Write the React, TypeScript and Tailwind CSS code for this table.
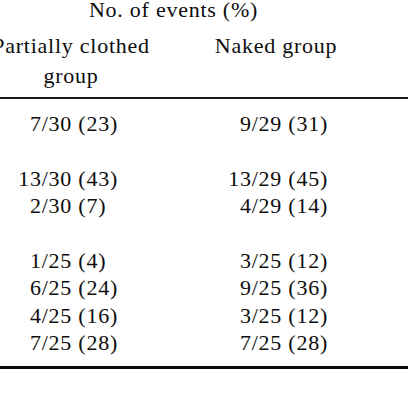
import React from "react";

type Cell = { n: string; rest: string } | null;

const col1: Cell[] = [
  { n: "7", rest: "/30 (23)" },
  null,
  { n: "13", rest: "/30 (43)" },
  { n: "2", rest: "/30 (7)" },
  null,
  { n: "1", rest: "/25 (4)" },
  { n: "6", rest: "/25 (24)" },
  { n: "4", rest: "/25 (16)" },
  { n: "7", rest: "/25 (28)" },
];

const col2: Cell[] = [
  { n: "9", rest: "/29 (31)" },
  null,
  { n: "13", rest: "/29 (45)" },
  { n: "4", rest: "/29 (14)" },
  null,
  { n: "3", rest: "/25 (12)" },
  { n: "9", rest: "/25 (36)" },
  { n: "3", rest: "/25 (12)" },
  { n: "7", rest: "/25 (28)" },
];

function Column({ cells, pad }: { cells: Cell[]; pad: "a" | "b" }) {
  return (
    <div className="flex flex-col">
      {cells.map((c, i) =>
        c ? (
          <div
            key={i}
            className={
              pad === "a"
                ? "flex h-[27.4px] leading-[27.4px] whitespace-nowrap pl-[27.75px]"
                : "flex h-[27.4px] leading-[27.4px] whitespace-nowrap pl-[32.75px]"
            }
          >
            <span className="w-[24px] text-right">{c.n}</span>
            <span>{c.rest}</span>
          </div>
        ) : (
          <div key={i} className="h-[27.4px]" />
        )
      )}
    </div>
  );
}

export default function App() {
  return (
    <div className="w-[408px] h-[408px] overflow-hidden bg-white text-[#0d0d0d] text-[22px] tracking-[0.75px] font-[family-name:Liberation_Serif,Times_New_Roman,serif]">
      <div className="grid grid-cols-[162px_162px] gap-x-[43px] -ml-[10px] w-max">
        <div className="col-span-2 text-center leading-[20px] whitespace-nowrap">
          No. of events (%)
        </div>
        <div className="mt-[10.6px] text-center leading-[30px] whitespace-nowrap">
          Partially clothed
          <br />
          group
        </div>
        <div className="mt-[10.6px] text-center leading-[30px] whitespace-nowrap">
          Naked group
        </div>
      </div>
      <div className="mt-[6px] h-[2px] w-full bg-[#1a1a1a]" />
      <div className="mt-[11.4px] grid grid-cols-[162px_162px] gap-x-[43px] -ml-[10px] w-max">
        <Column cells={col1} pad="a" />
        <Column cells={col2} pad="b" />
      </div>
      <div className="mt-[9.5px] h-[3px] w-full bg-[#0a0a0a]" />
    </div>
  );
}
